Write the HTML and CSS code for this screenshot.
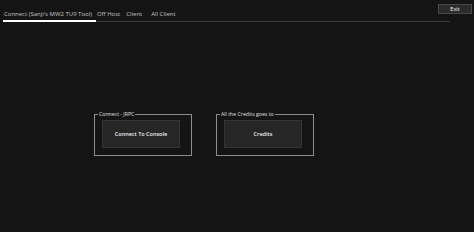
FILE: index.html
```html
<!DOCTYPE html>
<html lang="en">
<head>
    <meta charset="UTF-8">
    <meta name="viewport" content="width=device-width, initial-scale=1.0">
    <title>Sanji's MW2 TU9 Tool</title>
    <link rel="stylesheet" href="styles.css">
</head>
<body>

    <div class="window">
        <div class="tabs">
            <span class="tab active">Connect (Sanji's MW2 TU9 Tool)</span>
            <span class="tab">Off Host</span>
            <span class="tab">Client</span>
            <span class="tab">All Client</span>
        </div>
        <button class="exit">Exit</button>

        <div class="page">
            <fieldset class="group">
                <legend>Connect - JRPC</legend>
                <button class="button">Connect To Console</button>
            </fieldset>
            <fieldset class="group">
                <legend>All the Credits goes to</legend>
                <button class="button">Credits</button>
            </fieldset>
        </div>
    </div>

</body>
</html>
```

FILE: styles.css
```css
body {
    margin: 0;
    background-color: #141414;
    font-family: "Open Sans", "Noto Sans", Arial, sans-serif;
    overflow: hidden;
}
.window {
    position: relative;
    height: 232px;
}
.tabs {
    display: flex;
    margin: 0 24px 0 3px;
    padding-top: 9px;
    border-bottom: 1px solid #3c3c3c;
}
.tab {
    font-size: 6px;
    line-height: 10px;
    color: #c4c4c4;
    padding: 0 3px 1px 1px;
    white-space: nowrap;
}
.tab.active {
    border-bottom: 2px solid #ffffff;
    margin-bottom: -1px;
    padding-right: 4px;
}
.tab:nth-child(3) {
    margin-left: 2px;
}
.tab:last-child {
    margin-left: 5px;
}
.exit {
    position: absolute;
    top: 4px;
    right: 2px;
    width: 34px;
    height: 10px;
    padding: 0;
    background-color: #2b2b2b;
    border: 1px solid #484848;
    color: #ffffff;
    font-family: inherit;
    font-size: 5.5px;
    line-height: 8px;
}
.page {
    display: flex;
    gap: 24px;
    padding: 88px 0 0 94px;
}
.group {
    margin: 0;
    width: 98px;
    box-sizing: border-box;
    padding: 2px 11px 7px 7px;
    border: 1px solid #8c8c8c;
}
.group legend {
    font-size: 5.2px;
    line-height: 8px;
    color: #e0e0e0;
    padding: 0 1px;
    margin-left: -4px;
    white-space: nowrap;
}
.button {
    display: block;
    width: 78px;
    height: 28px;
    padding: 0;
    background-color: #262626;
    border: 1px solid #343434;
    color: #f2f2f2;
    font-family: inherit;
    font-size: 5.5px;
    font-weight: 600;
}
```
